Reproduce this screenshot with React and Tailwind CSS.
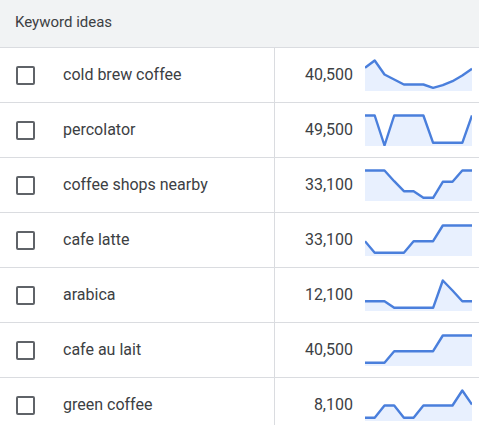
import React from 'react';

// keyword ideas table with monthly search trend sparklines
const rows = [
  { kw: 'cold brew coffee', vol: '40,500', pts: [7.3, 0, 14, 19, 24, 24, 24, 27.3, 24.7, 20.7, 15, 8.3] },
  { kw: 'percolator', vol: '49,500', pts: [0, 0, 30, 0, 0, 0, 0, 27.3, 27.3, 27.3, 27.3, 0] },
  { kw: 'coffee shops nearby', vol: '33,100', pts: [0, 0, 0, 10.7, 20.7, 20.7, 27.3, 27.3, 11.3, 11.3, 0, 0] },
  { kw: 'cafe latte', vol: '33,100', pts: [15.7, 27.3, 27.3, 27.3, 27.3, 15.7, 15.7, 15.7, 0, 0, 0, 0] },
  { kw: 'arabica', vol: '12,100', pts: [20.7, 20.7, 20.7, 27.3, 27.3, 27.3, 27.3, 27.3, 0, 10, 20.7, 20.7] },
  { kw: 'cafe au lait', vol: '40,500', pts: [27.3, 27.3, 27.3, 15.7, 15.7, 15.7, 15.7, 15.7, 0, 0, 0, 0] },
  { kw: 'green coffee', vol: '8,100', pts: [27.3, 27.3, 15, 15, 27.3, 27.3, 15, 15, 15, 15, 0, 14] },
];

function Spark({ pts }) {
  const step = 107 / 11;
  const line = pts.map((y, i) => `${(i * step).toFixed(1)},${y + 1.5}`).join(' ');
  const area = `0,32 ${line} 107,32`;
  return (
    <svg width="107" height="32" viewBox="0 0 107 32" className="block">
      <polygon points={area} fill="#e8f0fe" />
      <polyline points={line} fill="none" stroke="#4a7fdc" strokeWidth="2.4" strokeLinejoin="round" />
    </svg>
  );
}

export default function App() {
  return (
    <div className="w-[479px] h-[425px] overflow-hidden bg-white text-[#3c4043]" style={{ fontFamily: 'Roboto, "Liberation Sans", sans-serif' }}>
      <div className="h-[48px] bg-[#f1f3f4] border-b border-[#dadce0] flex items-center pl-[15px] text-[15px] pb-[2px]">
        Keyword ideas
      </div>
      {rows.map((r) => (
        <div key={r.kw} className="h-[55px] border-b border-[#dadce0] flex">
          <div className="w-[275px] border-r border-[#dadce0] flex items-center">
            <span className="ml-[16px] w-[19px] h-[19px] rounded-[2px] border-2 border-[#5f6368]" />
            <span className="ml-[28px] text-[16px]">{r.kw}</span>
          </div>
          <div className="flex-1 flex items-center justify-end pr-[7px]">
            <span className="text-[16px] mr-[12px]">{r.vol}</span>
            <Spark pts={r.pts} />
          </div>
        </div>
      ))}
    </div>
  );
}
